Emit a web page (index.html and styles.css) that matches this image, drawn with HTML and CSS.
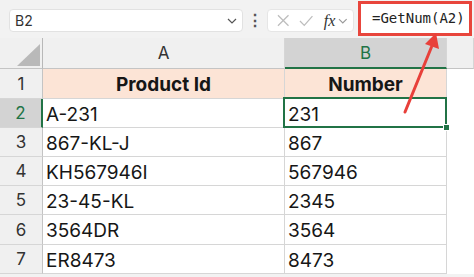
FILE: index.html
```html
<!DOCTYPE html>
<html lang="en">
<head>
    <meta charset="UTF-8">
    <title>GetNum</title>
    <link rel="stylesheet" href="styles.css">
</head>
<body>
    <div class="toolbar">
        <div class="name-box">
            <span>B2</span>
            <svg class="chev" width="10" height="6" viewBox="0 0 10 6"><path d="M1 1 L5 5 L9 1" fill="none" stroke="#555" stroke-width="1.2"/></svg>
        </div>
        <div class="dots">⋮</div>
        <div class="fn-box">
            <svg width="13" height="13" viewBox="0 0 13 13"><path d="M1 1 L12 12 M12 1 L1 12" stroke="#bdbdbd" stroke-width="1.3"/></svg>
            <svg width="15" height="12" viewBox="0 0 15 12"><path d="M1 6 L5.5 10.5 L14 1" fill="none" stroke="#bdbdbd" stroke-width="1.3"/></svg>
            <span class="fx">fx</span>
            <svg class="chev" width="10" height="6" viewBox="0 0 10 6"><path d="M1 1 L5 5 L9 1" fill="none" stroke="#999" stroke-width="1.2"/></svg>
        </div>
        <div class="formula">=GetNum(A2)</div>
    </div>

    <div class="sheet">
        <div class="hd corner"><div class="tri"></div></div>
        <div class="hd col">A</div>
        <div class="hd col on">B</div>
        <div class="hd col"></div>

        <div class="hd row">1</div>
        <div class="cell title">Product Id</div>
        <div class="cell title">Number</div>
        <div class="cell blank"></div>

        <div class="hd row on">2</div>
        <div class="cell">A-231</div>
        <div class="cell selected">231</div>
        <div class="cell blank"></div>

        <div class="hd row">3</div>
        <div class="cell">867-KL-J</div>
        <div class="cell">867</div>
        <div class="cell blank"></div>

        <div class="hd row">4</div>
        <div class="cell">KH567946I</div>
        <div class="cell">567946</div>
        <div class="cell blank"></div>

        <div class="hd row">5</div>
        <div class="cell">23-45-KL</div>
        <div class="cell">2345</div>
        <div class="cell blank"></div>

        <div class="hd row">6</div>
        <div class="cell">3564DR</div>
        <div class="cell">3564</div>
        <div class="cell blank"></div>

        <div class="hd row">7</div>
        <div class="cell">ER8473</div>
        <div class="cell">8473</div>
        <div class="cell blank"></div>
    </div>

    <svg class="arrow" width="474" height="277" viewBox="0 0 474 277">
        <line x1="405" y1="112" x2="431.5" y2="47" stroke="#e8403a" stroke-width="3" stroke-linecap="round"/>
        <polygon points="436,33 439,49 425,44" fill="#e8403a"/>
    </svg>
</body>
</html>
```

FILE: styles.css
```css
body {
    margin: 0;
    width: 474px;
    height: 277px;
    overflow: hidden;
    background-color: #f2f2f2;
    font-family: 'Inter', 'Liberation Sans', sans-serif;
    color: #1a1a1a;
    position: relative;
}
.toolbar {
    display: flex;
    align-items: flex-start;
    height: 38px;
    box-sizing: border-box;
    padding: 9px 0 0 9px;
}
.name-box {
    display: flex;
    align-items: center;
    justify-content: space-between;
    width: 234px;
    height: 23px;
    box-sizing: border-box;
    padding: 0 5px 0 5px;
    background-color: white;
    border: 1px solid #e2e2e2;
    border-radius: 4px;
    font-size: 14px;
    color: #333;
}
.dots {
    width: 24px;
    text-align: center;
    font-size: 16px;
    font-weight: bold;
    line-height: 23px;
    color: #555;
}
.fn-box {
    display: flex;
    align-items: center;
    gap: 10px;
    width: 87px;
    height: 23px;
    box-sizing: border-box;
    padding: 0 5px 0 9px;
    background-color: white;
    border: 1px solid #e6e6e6;
    border-radius: 4px;
}
.fn-box .chev {
    margin-left: -7px;
}
.fx {
    font-family: 'Liberation Serif', serif;
    font-style: italic;
    font-size: 16px;
    color: #333;
}
.formula {
    margin: -8px 0 0 4px;
    width: 114px;
    height: 35px;
    box-sizing: border-box;
    border: 3px solid #e8453c;
    background-color: white;
    font-family: 'DejaVu Sans Mono', monospace;
    font-size: 14px;
    line-height: 29px;
    padding-left: 11px;
    color: #222;
}
.sheet {
    display: grid;
    grid-template-columns: 43px 242px 162px 1fr;
    grid-template-rows: 31px 30px 29px 29px 29px 29px 30px 29px;
    background-color: white;
}
.sheet > div {
    box-sizing: border-box;
    border-right: 1px solid #d6d6d6;
    border-bottom: 1px solid #d6d6d6;
}
.hd {
    background-color: #f0f0f0;
    color: #333;
    font-size: 17px;
    display: flex;
    align-items: center;
    justify-content: center;
}
.sheet > .corner {
    align-items: flex-end;
    justify-content: flex-end;
    padding: 0 2px 2px 0;
    border-right-color: #b8b8b8;
    border-bottom-color: #c4c4c4;
}
.tri {
    width: 23px;
    height: 22px;
    background-color: #b9b9b9;
    clip-path: polygon(100% 0, 100% 100%, 0 100%);
}
.sheet > .col {
    border-bottom-color: #c4c4c4;
}
.sheet > .row {
    border-right-color: #c4c4c4;
}
.sheet > .hd.on {
    background-color: #d3d3d3;
    color: #217346;
}
.sheet > .col.on {
    border-bottom: 2px solid #217346;
}
.sheet > .row.on {
    border-right: 2px solid #217346;
}
.cell {
    font-size: 19px;
    padding-left: 3px;
    display: flex;
    align-items: center;
    padding-top: 2px;
    color: #161616;
}
.title {
    background-color: #fce4d6;
    justify-content: center;
    font-weight: bold;
    padding-left: 0;
}
.sheet > .blank {
    border: none;
    background-color: white;
}
.selected {
    position: relative;
}
.selected::after {
    content: '';
    position: absolute;
    left: -2px;
    top: -2px;
    right: -1px;
    bottom: -1px;
    border: 2px solid #217346;
}
.selected::before {
    content: '';
    position: absolute;
    right: -4px;
    bottom: -4px;
    width: 5px;
    height: 5px;
    background-color: #217346;
    border: 1px solid white;
    z-index: 1;
}
.arrow {
    position: absolute;
    left: 0;
    top: 0;
    pointer-events: none;
}
```
